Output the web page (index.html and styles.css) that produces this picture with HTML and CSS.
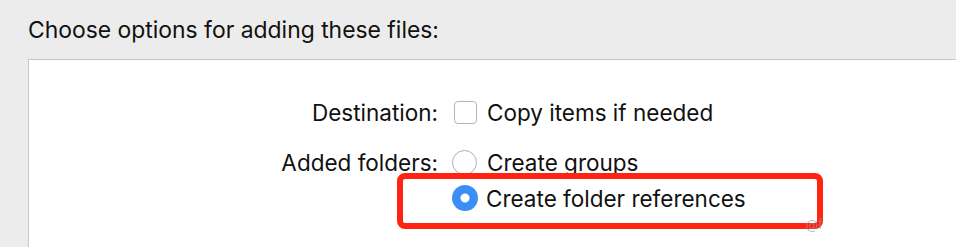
FILE: index.html
```html
<!DOCTYPE html>
<html lang="en">

<head>
    <meta charset="UTF-8">
    <link rel="stylesheet" href="styles.css">
    <title>Add Files Options</title>
</head>

<body>
    <h1 class="title">Choose options for adding these files:</h1>

    <div class="panel">
        <div class="option-row">
            <span class="option-label">Destination:</span>
            <span class="checkbox"></span>
            <span class="option-text">Copy items if needed</span>
        </div>

        <div class="option-row second">
            <span class="option-label">Added folders:</span>
            <span class="radio"></span>
            <span class="option-text">Create groups</span>
        </div>

        <div class="option-row third">
            <span class="option-label"></span>
            <span class="radio checked"></span>
            <span class="option-text">Create folder references</span>
        </div>

        <!-- highlight drawn over the selected option -->
        <div class="highlight">
            <span class="watermark">@f</span>
        </div>
    </div>
</body>

</html>
```

FILE: styles.css
```css
body {
    font-family: "Inter", "Liberation Sans", sans-serif;
    margin: 0;
    background-color: #ececec;
    color: #111;
    height: 247px;
    overflow: hidden;
}

.title {
    font-size: 22.9px;
    font-weight: normal;
    margin: 0;
    padding: 16px 0 0 28px;
    height: 59px;
    box-sizing: border-box;
    line-height: 28px;
}

.panel {
    position: relative;
    margin-left: 28px;
    height: 200px;
    background-color: white;
    border: 1px solid #c6c6c6;
    border-right: none;
    padding-top: 40px;
    box-sizing: border-box;
}

.option-row {
    display: flex;
    align-items: center;
    height: 24px;
    font-size: 22.5px;
}

.option-row.second {
    margin-top: 26px;
}

.option-row.third {
    margin-top: 12px;
}

.option-label {
    width: 409px;
    text-align: right;
    margin-right: 14px;
}

.option-text {
    margin-left: 8px;
}

.checkbox {
    width: 21px;
    height: 21px;
    margin-left: 2px;
    margin-right: 2px;
    border: 1px solid #b4b4b4;
    border-radius: 4px;
    background-color: white;
}

.radio {
    width: 23px;
    height: 23px;
    margin-right: 2px;
    border: 1px solid #b0b0b0;
    border-radius: 50%;
    background-color: white;
}

.radio.checked {
    width: 26px;
    height: 26px;
    margin-right: 0;
    border: none;
    background: radial-gradient(circle, white 4px, #3b8ef5 5px);
}

.highlight {
    position: absolute;
    left: 368px;
    top: 113px;
    width: 426px;
    height: 56px;
    border: 6px solid #ff2312;
    border-radius: 8px;
    box-sizing: border-box;
}

.watermark {
    position: absolute;
    right: -6px;
    bottom: -9px;
    font-size: 13px;
    color: rgba(150, 150, 150, 0.6);
}
```
